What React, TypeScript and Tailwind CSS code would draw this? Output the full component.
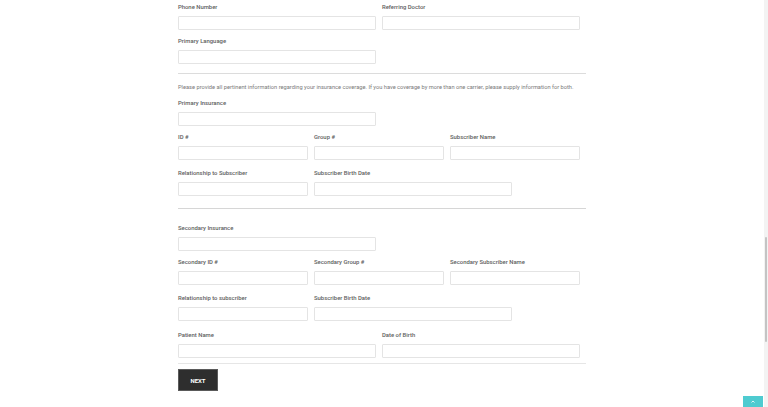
import React from "react";

const font = { fontFamily: "Roboto, 'Liberation Sans', sans-serif" };

function Field({ label, w, className = "" }: { label: string; w: string; className?: string }) {
  return (
    <div className={`flex flex-col ${w} ${className}`}>
      <div className="h-[8px] leading-[8px] text-[5.9px] font-medium text-[#606060] whitespace-nowrap">{label}</div>
      <div className="mt-[5px] h-[14px] w-full border border-[#e4e4e4] rounded-[1px] bg-white" />
    </div>
  );
}

export default function App() {
  return (
    <div className="w-[768px] h-[407px] overflow-hidden bg-white flex relative" style={font}>
      <div className="flex-1 flex justify-center">
        <div className="w-[408px] flex flex-col">
          <div className="flex gap-[6px] mt-[3px]">
            <Field label="Phone Number" w="w-[198px]" />
            <Field label="Referring Doctor" w="w-[198px]" />
          </div>
          <div className="flex gap-[6px] mt-[7px]">
            <Field label="Primary Language" w="w-[198px]" />
          </div>
          <div className="mt-[9px] h-px bg-[#dcdcdc] w-[408px]" />
          <div className="mt-[9px] h-[8px] leading-[8px] text-[5.7px] text-[#7a7a7a] whitespace-nowrap">
            Please provide all pertinent information regarding your insurance coverage. If you have coverage by more than one carrier, please supply information for both.
          </div>
          <div className="flex gap-[6px] mt-[8px]">
            <Field label="Primary Insurance" w="w-[198px]" />
          </div>
          <div className="flex gap-[6px] mt-[7px]">
            <Field label="ID #" w="w-[130px]" />
            <Field label="Group #" w="w-[130px]" />
            <Field label="Subscriber Name" w="w-[130px]" />
          </div>
          <div className="flex gap-[6px] mt-[9px]">
            <Field label="Relationship to Subscriber" w="w-[130px]" />
            <Field label="Subscriber Birth Date" w="w-[198px]" />
          </div>
          <div className="mt-[12px] h-px bg-[#d6d6d6] w-[408px]" />
          <div className="flex gap-[6px] mt-[15px]">
            <Field label="Secondary Insurance" w="w-[198px]" />
          </div>
          <div className="flex gap-[6px] mt-[7px]">
            <Field label="Secondary ID #" w="w-[130px]" />
            <Field label="Secondary Group #" w="w-[130px]" />
            <Field label="Secondary Subscriber Name" w="w-[130px]" />
          </div>
          <div className="flex gap-[6px] mt-[9px]">
            <Field label="Relationship to subscriber" w="w-[130px]" />
            <Field label="Subscriber Birth Date" w="w-[198px]" />
          </div>
          <div className="flex gap-[6px] mt-[10px]">
            <Field label="Patient Name" w="w-[198px]" />
            <Field label="Date of Birth" w="w-[198px]" />
          </div>
          <div className="mt-[5px] h-px bg-[#e6e6e6] w-[408px]" />
          <div className="mt-[5px]">
            <button className="w-[40px] h-[22px] bg-[#2e2e2e] border border-[#5a5a5a] text-white text-[6px] font-bold flex items-center justify-center">
              NEXT
            </button>
          </div>
        </div>
      </div>
      <div className="w-[4px] h-full bg-[#f3f3f3] flex flex-col items-center">
        <div className="mt-[237px] w-[2px] h-[105px] bg-[#c4c4c4] rounded-full" />
      </div>
      <div className="absolute left-[743px] top-[396px] w-[20px] h-[11px] bg-[#4ecbd0] flex items-center justify-center">
        <svg width="4" height="3" viewBox="0 0 4 3">
          <path d="M0.5 2.5 L2 1 L3.5 2.5" stroke="white" strokeWidth="0.8" fill="none" />
        </svg>
      </div>
    </div>
  );
}
